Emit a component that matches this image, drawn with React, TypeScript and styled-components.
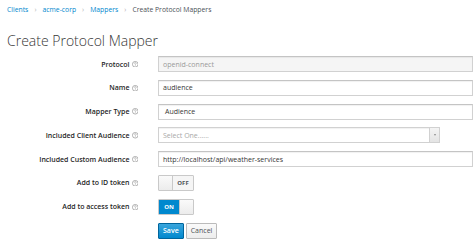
import styled, { createGlobalStyle } from 'styled-components';

const GlobalStyle = createGlobalStyle`
  html, body {
    margin: 0;
    padding: 0;
    background: #ffffff;
  }
  body {
    font-family: "Open Sans", "Liberation Sans", sans-serif;
    color: #363636;
    width: 474px;
    overflow: hidden;
  }
`;

const Page = styled.div`
  padding: 5px 1px 0 7px;
`;

const Breadcrumb = styled.ol`
  list-style: none;
  margin: 0;
  padding: 0;
  display: flex;
  align-items: center;
  font-size: 6.8px;
  line-height: 10px;
`;

const Crumb = styled.li<{ $active?: boolean }>`
  color: ${({ $active }) => ($active ? '#4d5258' : '#0088ce')};
`;

const Separator = styled.li`
  color: #b3b3b3;
  font-size: 7px;
  padding: 0 6px 0 6px;
`;

const Title = styled.h1`
  margin: 16px 0 0;
  font-size: 14px;
  font-weight: 300;
  line-height: 20px;
  color: #363636;
`;

const Form = styled.form`
  margin-top: 5px;
  display: grid;
  grid-template-columns: 131px 1fr;
  column-gap: 20px;
  row-gap: 7.8px;
  align-items: center;
`;

const Label = styled.label`
  display: flex;
  justify-content: flex-end;
  align-items: center;
  gap: 2px;
  font-size: 7px;
  font-weight: 600;
  color: #1f1f1f;
  white-space: nowrap;
`;

const Help = () => (
  <svg width="6.5" height="6.5" viewBox="0 0 12 12" aria-hidden="true">
    <circle cx="6" cy="6" r="5.2" fill="none" stroke="#9c9c9c" strokeWidth="1.4" />
    <path d="M4.4 4.6a1.6 1.6 0 1 1 2.3 1.4c-.5.3-.7.5-.7 1.1" fill="none" stroke="#9c9c9c" strokeWidth="1.3" />
    <circle cx="6" cy="8.8" r="0.8" fill="#9c9c9c" />
  </svg>
);

const Input = styled.div<{ $disabled?: boolean; $indent?: boolean }>`
  box-sizing: border-box;
  height: 16px;
  display: flex;
  align-items: center;
  padding-left: ${({ $indent }) => ($indent ? '6px' : '4px')};
  border: 1px solid #d1d1d1;
  border-top-color: #c4c4c4;
  box-shadow: inset 0 1px 1px rgba(0, 0, 0, 0.06);
  background: ${({ $disabled }) => ($disabled ? '#f5f5f5' : '#ffffff')};
  color: ${({ $disabled }) => ($disabled ? '#9a9a9a' : '#363636')};
  font-size: 7px;
  white-space: nowrap;
`;

const Select = styled.div`
  box-sizing: border-box;
  width: 282px;
  height: 16px;
  display: flex;
  align-items: stretch;
  border: 1px solid #d1d1d1;
  box-shadow: inset 0 1px 1px rgba(0, 0, 0, 0.06);
  background: #ffffff;
  font-size: 7px;
  color: #a8a8a8;
`;

const SelectText = styled.span`
  flex: 1;
  display: flex;
  align-items: center;
  padding-left: 4px;
`;

const SelectArrow = styled.span`
  width: 9px;
  border-left: 1px solid #d1d1d1;
  background: linear-gradient(#f4f4f4, #e4e4e4);
  display: flex;
  align-items: center;
  justify-content: center;

  &::after {
    content: '';
    border-left: 1.5px solid transparent;
    border-right: 1.5px solid transparent;
    border-top: 2px solid #8a8a8a;
  }
`;

const Switch = styled.div<{ $on?: boolean }>`
  box-sizing: border-box;
  width: 36px;
  height: 16px;
  display: flex;
  flex-direction: ${({ $on }) => ($on ? 'row' : 'row-reverse')};
  justify-content: flex-end;
  border: 1px solid #c9c9c9;
  border-radius: 1px;
  overflow: hidden;
`;

const SwitchLabel = styled.span<{ $on?: boolean }>`
  flex: 1;
  display: flex;
  align-items: center;
  justify-content: center;
  font-size: 6px;
  font-weight: 700;
  background: ${({ $on }) => ($on ? '#0088ce' : '#f5f5f5')};
  color: ${({ $on }) => ($on ? '#ffffff' : '#4d5258')};
`;

const SwitchHandle = styled.span<{ $on?: boolean }>`
  width: 13px;
  background: linear-gradient(#fafafa, #ececec);
  ${({ $on }) => ($on ? 'border-left: 1px solid #c9c9c9;' : 'border-right: 1px solid #c9c9c9;')}
`;

const Buttons = styled.div`
  display: flex;
  gap: 2px;
`;

const Button = styled.button<{ $primary?: boolean }>`
  box-sizing: border-box;
  height: 16px;
  padding: 0 4px;
  font-family: inherit;
  font-size: 7px;
  font-weight: ${({ $primary }) => ($primary ? 600 : 400)};
  border-radius: 1px;
  border: 1px solid ${({ $primary }) => ($primary ? '#00659c' : '#bbbbbb')};
  background: ${({ $primary }) =>
    $primary ? 'linear-gradient(#39a5dc, #0088ce)' : 'linear-gradient(#fafafa, #ededed)'};
  color: ${({ $primary }) => ($primary ? '#ffffff' : '#4d5258')};
`;

export default function App() {
  return (
    <>
      <GlobalStyle />
      <Page>
        <Breadcrumb>
          <Crumb>Clients</Crumb>
          <Separator>›</Separator>
          <Crumb>acme-corp</Crumb>
          <Separator>›</Separator>
          <Crumb>Mappers</Crumb>
          <Separator>›</Separator>
          <Crumb $active>Create Protocol Mappers</Crumb>
        </Breadcrumb>
        <Title>Create Protocol Mapper</Title>
        <Form>
          <Label>Protocol <Help /></Label>
          <Input $disabled>openid-connect</Input>

          <Label>Name <Help /></Label>
          <Input>audience</Input>

          <Label>Mapper Type <Help /></Label>
          <Input $indent>Audience</Input>

          <Label>Included Client Audience <Help /></Label>
          <Select>
            <SelectText>Select One......</SelectText>
            <SelectArrow />
          </Select>

          <Label>Included Custom Audience <Help /></Label>
          <Input>http://localhost/api/weather-services</Input>

          <Label>Add to ID token <Help /></Label>
          <Switch>
            <SwitchLabel>OFF</SwitchLabel>
            <SwitchHandle />
          </Switch>

          <Label>Add to access token <Help /></Label>
          <Switch $on>
            <SwitchLabel $on>ON</SwitchLabel>
            <SwitchHandle $on />
          </Switch>

          <span />
          <Buttons>
            <Button $primary type="button">Save</Button>
            <Button type="button">Cancel</Button>
          </Buttons>
        </Form>
      </Page>
    </>
  );
}
